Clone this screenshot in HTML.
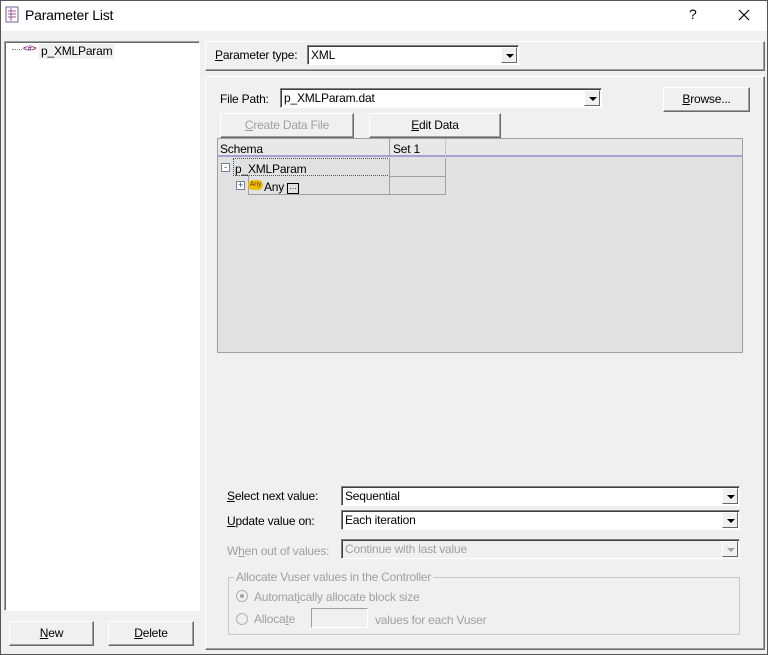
<!DOCTYPE html>
<html><head><meta charset="utf-8"><style>
*{box-sizing:border-box;margin:0;padding:0}
body{width:768px;height:655px;background:#f0f0f0;font-family:"Liberation Sans",sans-serif;font-size:12px;letter-spacing:-0.2px;color:#000;position:relative;overflow:hidden}
.a{position:absolute}
.frame{left:0;top:0;width:768px;height:655px;border:1px solid #555}
.title{left:1px;top:1px;width:766px;height:30px;background:#fff}
.sunk{border:1px solid;border-color:#a0a0a0 #fff #fff #a0a0a0;box-shadow:inset 1px 1px 0 #696969}
.raised{border:1px solid;border-color:#fff #696969 #696969 #fff;box-shadow:inset -1px -1px 0 #a0a0a0}
.btn{background:#f0f0f0;text-align:center;line-height:22px}
.combo{background:#fff;border:1px solid;border-color:#808080 #fff #fff #808080;box-shadow:inset 1px 1px 0 #404040;padding-left:3px;line-height:18px}
.dd{position:absolute;right:1px;top:1px;width:16px;bottom:1px;background:#f0f0f0;border:1px solid;border-color:#fff #696969 #696969 #fff}
.dd:after{content:"";position:absolute;left:4px;top:6px;border-left:4px solid transparent;border-right:4px solid transparent;border-top:4px solid #000}
.dis{color:#a0a0a0}
.dd.dis2:after{border-top-color:#a0a0a0}
u{text-decoration:underline}
.cell{border-right:1px solid #a0a0a0;border-bottom:1px solid #a0a0a0;position:absolute}
</style></head><body>
<div class="a title"></div>
<div class="a frame"></div>
<svg class="a" style="left:5px;top:6px" width="14" height="17"><rect x="1" y="1" width="12" height="15" fill="#fff" stroke="#7a5a9a"/><g stroke="#a050a0"><line x1="3" y1="5" x2="11" y2="5"/><line x1="3" y1="8" x2="11" y2="8"/><line x1="3" y1="11" x2="11" y2="11"/><line x1="6" y1="2" x2="6" y2="15"/></g></svg>
<div class="a" style="left:25px;top:7px;font-size:14px">Parameter List</div>
<div class="a" style="left:689px;top:6px;font-size:14px">?</div>
<svg class="a" style="left:738px;top:9px" width="12" height="12"><path d="M1 1L11 11M11 1L1 11" stroke="#000" stroke-width="1.2"/></svg>

<div class="a sunk" style="left:4px;top:41px;width:196px;height:570px;background:#fff"></div>
<div class="a" style="left:12px;top:49px;width:10px;border-top:1px dotted #888"></div>
<div class="a" style="left:23px;top:44px;font-size:8px;font-weight:bold;color:#802080">&lt;#&gt;</div>
<div class="a" style="left:39px;top:44px;height:15px;background:#f0f0f0;padding:0 2px">p_XMLParam</div>

<div class="a raised btn" style="left:9px;top:621px;width:85px;height:25px"><u>N</u>ew</div>
<div class="a raised btn" style="left:108px;top:621px;width:86px;height:25px"><u>D</u>elete</div>

<div class="a raised" style="left:205px;top:41px;width:560px;height:30px"></div>
<div class="a" style="left:215px;top:48px"><u>P</u>arameter type:</div>
<div class="a combo" style="left:307px;top:45px;width:212px;height:20px">XML<div class="dd"></div></div>

<div class="a raised" style="left:205px;top:76px;width:560px;height:574px"></div>
<div class="a" style="left:220px;top:92px">File Path:</div>
<div class="a combo" style="left:280px;top:88px;width:322px;height:20px">p_XMLParam.dat<div class="dd"></div></div>
<div class="a raised btn" style="left:663px;top:87px;width:87px;height:25px"><u>B</u>rowse...</div>
<div class="a raised btn dis" style="left:220px;top:113px;width:134px;height:25px"><u>C</u>reate Data File</div>
<div class="a raised btn" style="left:369px;top:113px;width:132px;height:25px"><u>E</u>dit Data</div>

<div class="a" style="left:217px;top:138px;width:526px;height:215px;background:#e1e1e1;border:1px solid #a0a0a0"></div>
<div class="a" style="left:218px;top:139px;width:524px;height:18px;background:#e8e8e8;border-bottom:2px solid #a8a0d0"></div>
<div class="a" style="left:220px;top:142px">Schema</div>
<div class="a" style="left:389px;top:139px;height:18px;border-left:1px solid #a0a0a0"></div>
<div class="a" style="left:445px;top:139px;height:18px;border-left:1px solid #c8c8c8"></div>
<div class="a" style="left:393px;top:142px">Set 1</div>
<div class="cell" style="left:233px;top:158px;width:157px;height:18px;border:1px dotted #555"></div>
<div class="cell" style="left:389px;top:158px;width:57px;height:19px;border-left:1px solid #a0a0a0"></div>
<div class="cell" style="left:248px;top:176px;width:142px;height:19px;border-left:1px solid #a0a0a0"></div>
<div class="cell" style="left:389px;top:176px;width:57px;height:19px;border-left:1px solid #a0a0a0"></div>
<div class="a" style="left:221px;top:163px;width:9px;height:9px;border:1px solid #7080a0;background:#fff;font-size:9px;line-height:6px;text-align:center;color:#204080">-</div>
<div class="a" style="left:235px;top:162px">p_XMLParam</div>
<div class="a" style="left:236px;top:181px;width:9px;height:9px;border:1px solid #7080a0;background:#fff;font-size:9px;line-height:7px;text-align:center;color:#204080">+</div>
<div class="a" style="left:248px;top:180px;width:15px;height:10px;border-radius:5px;background:#f0c000;font-size:7px;line-height:10px;text-align:center;color:#7a4000">Any</div>
<div class="a" style="left:264px;top:180px">Any <span style="border:1px solid #000;font-size:8px;padding:0 1px">···</span></div>

<div class="a" style="left:227px;top:489px"><u>S</u>elect next value:</div>
<div class="a combo" style="left:341px;top:486px;width:399px;height:20px">Sequential<div class="dd"></div></div>
<div class="a" style="left:227px;top:514px"><u>U</u>pdate value on:</div>
<div class="a combo" style="left:341px;top:510px;width:399px;height:20px">Each iteration<div class="dd"></div></div>
<div class="a dis" style="left:227px;top:544px">W<u>h</u>en out of values:</div>
<div class="a combo dis" style="left:341px;top:539px;width:399px;height:20px;background:#f0f0f0">Continue with last value<div class="dd dis2"></div></div>

<div class="a" style="left:228px;top:577px;width:512px;height:58px;border:1px solid #c8c8c8"></div>
<div class="a dis" style="left:234px;top:570px;background:#f0f0f0;padding:0 2px">Allocate Vuser values in the Controller</div>
<div class="a" style="left:236px;top:590px;width:12px;height:12px;border-radius:6px;border:1px solid #b0b0b0;background:#f0f0f0"><div style="margin:3px;width:4px;height:4px;border-radius:2px;background:#a0a0a0"></div></div>
<div class="a dis" style="left:254px;top:590px">Automat<u>i</u>cally allocate block size</div>
<div class="a" style="left:236px;top:613px;width:12px;height:12px;border-radius:6px;border:1px solid #b0b0b0;background:#f0f0f0"></div>
<div class="a dis" style="left:254px;top:612px">Alloca<u>t</u>e</div>
<div class="a" style="left:311px;top:608px;width:57px;height:20px;border:1px solid;border-color:#a0a0a0 #fff #fff #a0a0a0"></div>
<div class="a dis" style="left:375px;top:613px">values for each Vuser</div>
</body></html>
